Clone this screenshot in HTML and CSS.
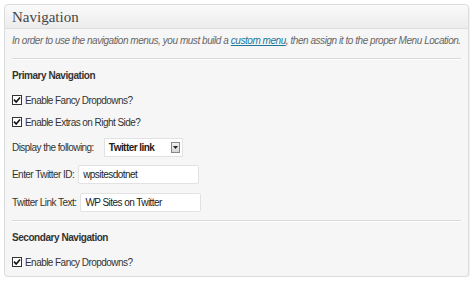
FILE: index.html
```html
<!DOCTYPE html>
<html lang="en">
<head>
    <meta charset="UTF-8">
    <title>Navigation</title>
    <link rel="stylesheet" href="styles.css">
</head>
<body>
    <div class="postbox">
        <h3 class="hndle">Navigation</h3>
        <div class="inside">
            <p class="intro">In order to use the navigation menus, you must build a <a href="#">custom menu</a>, then assign it to the proper Menu Location.</p>
            <hr>
            <h4>Primary Navigation</h4>
            <div class="row first">
                <span class="check"><svg width="10" height="10" viewBox="0 0 10 10"><rect x="0.5" y="0.5" width="9" height="9" fill="#fff" stroke="#333"/><path d="M2 4.6 L4.2 7 L8 2.4" fill="none" stroke="#111" stroke-width="1.6"/></svg></span>
                Enable Fancy Dropdowns?
            </div>
            <div class="row">
                <span class="check"><svg width="10" height="10" viewBox="0 0 10 10"><rect x="0.5" y="0.5" width="9" height="9" fill="#fff" stroke="#333"/><path d="M2 4.6 L4.2 7 L8 2.4" fill="none" stroke="#111" stroke-width="1.6"/></svg></span>
                Enable Extras on Right Side?
            </div>
            <div class="row display">
                <span class="label">Display the following:</span>
                <div class="select">
                    <span>Twitter link</span>
                    <span class="arrow"><svg width="5" height="3" viewBox="0 0 5 3"><path d="M0 0 H5 L2.5 3 Z" fill="#222"/></svg></span>
                </div>
            </div>
            <div class="row twitter-id">
                <span class="label">Enter Twitter ID:</span>
                <div class="field">wpsitesdotnet</div>
            </div>
            <div class="row link-text">
                <span class="label">Twitter Link Text:</span>
                <div class="field">WP Sites on Twitter</div>
            </div>
            <hr class="lower">
            <h4>Secondary Navigation</h4>
            <div class="row first">
                <span class="check"><svg width="10" height="10" viewBox="0 0 10 10"><rect x="0.5" y="0.5" width="9" height="9" fill="#fff" stroke="#333"/><path d="M2 4.6 L4.2 7 L8 2.4" fill="none" stroke="#111" stroke-width="1.6"/></svg></span>
                Enable Fancy Dropdowns?
            </div>
        </div>
    </div>
</body>
</html>
```

FILE: styles.css
```css
body {
    margin: 0;
    padding: 4px 5px 0 4px;
    background: #fff;
    font-family: 'Liberation Sans', Arial, sans-serif;
    font-size: 10px;
    letter-spacing: -0.45px;
    color: #333;
}

.postbox {
    background: #f6f6f6;
    border: 1px solid #dcdcdc;
    border-radius: 4px;
    box-shadow: 1px 1px 1px rgba(0, 0, 0, 0.06);
    height: 273px;
    box-sizing: border-box;
}

.hndle {
    margin: 0;
    height: 24px;
    box-sizing: border-box;
    padding: 4px 0 0 7px;
    font-family: 'Liberation Serif', Georgia, serif;
    font-weight: normal;
    font-size: 15px;
    line-height: 17px;
    letter-spacing: 0;
    color: #464646;
    background: linear-gradient(#fafafa, #ececec);
    border-bottom: 1px solid #dfdfdf;
    border-radius: 4px 4px 0 0;
}

.inside {
    padding: 0 7px;
}

.intro {
    margin: 5px 0 0;
    font-style: italic;
    color: #666;
    line-height: 14px;
    white-space: nowrap;
}

.intro a {
    color: #21759b;
}

hr {
    border: 0;
    border-top: 1px solid #dadada;
    border-bottom: 1px solid #fff;
    margin: 10px 0 0;
}

h4 {
    margin: 9px 0 0;
    font-size: 10px;
    line-height: 14px;
    color: #333;
}

.row {
    display: flex;
    align-items: center;
    height: 22px;
    letter-spacing: -0.55px;
}

.row.first {
    margin-top: 6px;
}

.row.display {
    margin-top: 3px;
}

.row.twitter-id {
    margin-top: 5px;
}

.row.link-text {
    margin-top: 6px;
}

hr.lower {
    margin-top: 7px;
}

.check {
    display: inline-flex;
    margin-right: 3px;
}

.label {
    margin-right: 4px;
}

.display .label {
    margin-right: 10px;
}

.select {
    display: flex;
    align-items: center;
    justify-content: space-between;
    width: 79px;
    height: 19px;
    box-sizing: border-box;
    padding: 0 2px 0 4px;
    background: #fff;
    border: 1px solid #e2e2e2;
    font-weight: bold;
    color: #222;
}

.arrow {
    display: flex;
    align-items: center;
    justify-content: center;
    width: 9px;
    height: 11px;
    background: linear-gradient(#f2f2f2, #d6d6d6);
    border: 1px solid #888;
    box-sizing: border-box;
}

.field {
    display: flex;
    align-items: center;
    width: 121px;
    height: 19px;
    box-sizing: border-box;
    padding: 0 4px;
    background: #fff;
    border: 1px solid #e2e2e2;
    border-radius: 2px;
    color: #222;
}
```
